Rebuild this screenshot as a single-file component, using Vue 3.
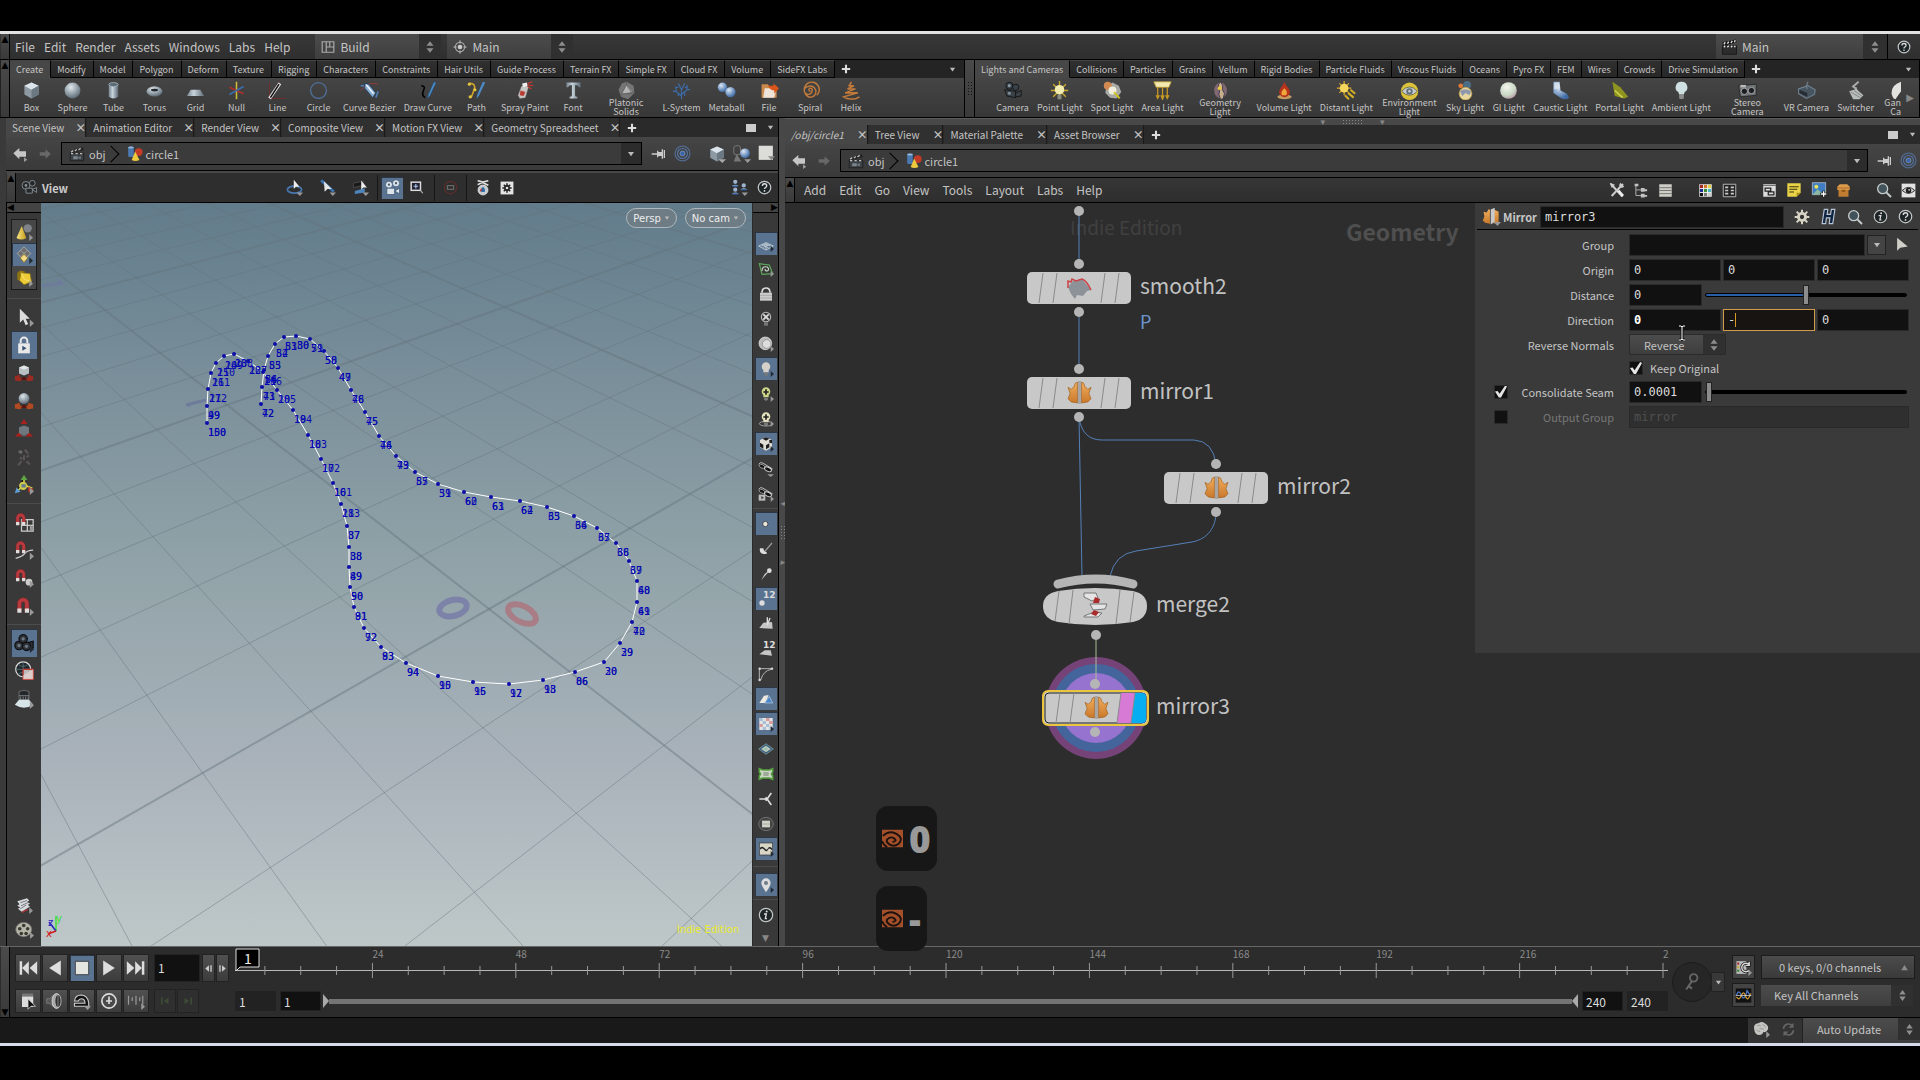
<script setup>
import { h, ref } from 'vue'

const cone = '<path d="M2 20L9 4l6 16q-6 4-13 0z" fill="url(#gYellow)"/>'
const magnet = '<path d="M3 19V9a7 7 0 0 1 14 0v10h-5V9a2 2 0 0 0-4 0v10z" fill="#b93a3e" stroke="#7a1e20" stroke-width=".6"/><path d="M3 15h5v5H3zM12 15h5v5h-5z" fill="#ddd"/>'
const corner = '<path d="M19 15l5 4.500-5 4.500z" fill="#999"/>'
const cornerDown = '<path d="M15 19h9l-4.500 5z" fill="#999"/>'
const cornerDark = '<path d="M19 15l5 4.500-5 4.500z" fill="#222a33"/>'
const clapper = '<path d="M3 11h18v10H3z" fill="#3c4145" stroke="#1a1a1a"/><path d="M3 8l17-5 1 4-18 4z" fill="#222"/><path d="M4 9.500l3-2M9 8l3-2M14 6.500l3-2M4 11.500h3M10 11.500h3M16 11.500h3" stroke="#bbb" stroke-width="1.800"/><path d="M7 15h6v4H7zM13 17l4-2v4z" fill="#7a858c"/>'
const cube = '<path d="M12 2l9 4v11l-9 5-9-5V6z" fill="#8e9aa3"/><path d="M12 2l9 4-9 5-9-5z" fill="#dbe4ea"/><path d="M12 11v11l9-5V6z" fill="#6c7881"/>'
const pointer = '<path d="M7 2v17l4-4 3 7 3-1.500-3-6.500h5z" fill="#ddd"/>'
const bulb = (c) => `<path d="M12 2a6.500 6.500 0 0 0-4 11.500V17h8v-3.500A6.500 6.500 0 0 0 12 2z" fill="${c}"/><path d="M9 18h6v2l-2 2h-2l-2-2z" fill="#777"/>`
const glasses = '<path d="M1 5q2-4 6-2l15 9" stroke="#bbb" fill="none" stroke-width="1.500"/><ellipse cx="6" cy="8" rx="4.500" ry="2.500" transform="rotate(25 6 8)" fill="#111" stroke="#bbb"/><ellipse cx="15" cy="12.500" rx="5.500" ry="3" transform="rotate(25 15 12.500)" fill="#111" stroke="#ddd" stroke-width="1.400"/>'
const help = '<circle cx="12" cy="12" r="10" fill="#1e2526" stroke="#c4c8c8" stroke-width="2"/><path d="M8.500 9.500q0-3.500 3.500-3.500t3.500 3q0 2-2 3-1.500.8-1.500 2.500" fill="none" stroke="#ddd" stroke-width="2.200"/><circle cx="12" cy="17.500" r="1.400" fill="#ddd"/>'
const mirrorHalves = '<path d="M10 2v20l-6-1-3-3 2-5-2-6 3 2 3-3 1-3zM14 2v20l6-1 3-3-2-5 2-6-3 2-3-3-1-3z" fill="url(#gOrange)" stroke="#a0601c" stroke-width=".7"/><path d="M10.500 1h3v22h-3z" fill="#a9a5a5"/>'
const transform = (m) => `<path d="M1 16l6-2v3l5 2 5-2v-3l6 2v5l-6 1-5-3-5 3-6-1z" fill="${m}"/><path d="M8 20l4-4 4 4z" fill="#5c100d"/>`
const check = (a, b) => `<rect x="2" y="3" width="20" height="18" fill="${a}"/><path d="M2 3h5v4.500H2zM12 3h5v4.500h-5zM7 7.500h5V12H7zM17 7.500h5V12h-5zM2 12h5v4.500H2zM12 12h5v4.500h-5zM7 16.500h5V21H7zM17 16.500h5V21h-5z" fill="${b}"/>`

const icons = {
  box: cube,
  sphere: '<circle cx="12" cy="12" r="10" fill="url(#gSphere)"/>',
  tube: '<path d="M6 4v16q6 4 12 0V4z" fill="url(#gMetal)"/><ellipse cx="12" cy="4.500" rx="6" ry="2.500" fill="#5b6972" stroke="#a8b6bf"/>',
  torus: '<ellipse cx="12" cy="13" rx="10" ry="6.500" fill="url(#gSphere)"/><ellipse cx="12" cy="11.500" rx="4.500" ry="1.800" fill="#23282c"/>',
  grid: '<path d="M6 11h12l5 8H1z" fill="url(#gMetal)"/>',
  null: '<path d="M12 1v22" stroke="#d0bb34" stroke-width="2"/><path d="M3 8l18 8" stroke="#b32f2a" stroke-width="2"/><path d="M3 17L21 7" stroke="#3c6fae" stroke-width="2"/>',
  line: '<path d="M1 22h22M2 22V2M2 22L14 1" stroke="#7d2b2b" stroke-width="1"/><path d="M2 22L15 3" stroke="#eee" stroke-width="4"/><path d="M3 21L14 4" stroke="#111" stroke-width="2"/>',
  circle: '<circle cx="12" cy="12" r="10" fill="none" stroke="#50719c" stroke-width="1.600"/>',
  bezier: '<path d="M1 12q8-12 22-8" stroke="#a23a3a" fill="none"/><path d="M6 3l5 1 9 11-4 6L6 9z" fill="#8bb0d4" stroke="#1c3858"/><path d="M8 5l9 11" stroke="#fff" stroke-width="1.500"/><path d="M1 6h4M20 21l3-8" stroke="#4b7db8" stroke-width="2"/>',
  drawcurve: '<path d="M4 6q6 0 3 6t2 9" stroke="#000" stroke-width="2" fill="none"/><path d="M20 1l3 1-8 17-3 3 1-5z" fill="#4b8ac4" stroke="#1d446c" stroke-width=".6"/>',
  path: '<path d="M3 3q9 0 6 8t-4 10" stroke="#d3a62a" stroke-width="2" fill="none"/><circle cx="3" cy="4" r="2" fill="#e6c63f"/><circle cx="10" cy="11" r="2" fill="#e6c63f"/><circle cx="4" cy="20" r="2" fill="#e6c63f"/><path d="M20 1l3 1-8 17-3 3 1-5z" fill="#4b8ac4"/>',
  spray: '<path d="M8 7l6-2 3 3-4 13-7 1-2-4z" fill="#c9c5c2" stroke="#777" stroke-width=".5"/><path d="M9 3l6-1 1 4-6 2z" fill="#eee"/><path d="M7 12l6 2-2 5-5-1z" fill="#b93b33"/><path d="M16 3l6-2M16 5l7 1M16 7l5 3" stroke="#c83a31" stroke-width="1.500"/>',
  font: '<path d="M3 2h18v6h-2q-1-3-5-3v13q0 2 3 2v2H7v-2q3 0 3-2V5Q6 5 5 8H3z" fill="url(#gMetal)"/>',
  platonic: '<path d="M12 1l9 5 1 9-8 8-9-3-3-9 4-8z" fill="#757575"/><path d="M12 5l7 9-13 2z" fill="#b5b5b5"/><path d="M12 5V1M19 14l3 1M6 16l-1 4M12 5L6 16h13z" stroke="#555" fill="none" stroke-width=".7"/>',
  lsystem: '<path d="M12 23V11M12 19l-7-6M12 17l7-6M5 13V7M5 13H1M19 11V5M19 11h4M12 11L8 3M12 11l4-8M8 8H4M16 8h4M8 15v4M16 14v5" stroke="#3d6ca8" stroke-width="1.500" fill="none"/>',
  metaball: '<circle cx="7" cy="8" r="6" fill="url(#gBlue)"/><circle cx="17" cy="14" r="6.500" fill="url(#gBlue)"/>',
  file: '<path d="M2 4h8l2 3h9v14H2z" fill="#c98a4b"/><path d="M4 21L6 9h15l-3 12z" fill="#eee3d8"/><path d="M10 6h7V3l7 6-6 7v-4q-5 0-8-6z" fill="#d9561b"/>',
  spiral: '<path d="M12 13a2 2 0 1 1 2-2 5 5 0 1 1-5-4 7 7 0 1 1-4 8A9.500 9.500 0 1 1 20 18" fill="none" stroke="#c27a3b" stroke-width="1.800"/>',
  helix: '<path d="M12 1L9 6h6L7 10h10L4 15h16L2 20q5 4 16 2l4-2" fill="none" stroke="#c27a3b" stroke-width="1.900"/>',
  camera: '<g fill="#3a4147" stroke="#0d0f11"><circle cx="8" cy="6" r="4.500"/><circle cx="16" cy="8" r="4"/><path d="M2 11l14 2v8L5 19z"/><path d="M16 15l7-3v7l-7 1z"/></g><circle cx="8" cy="6" r="1.800" fill="#8fa0ad"/><circle cx="8" cy="15.500" r="2" fill="#7c8d9a"/>',
  pointlight: '<path d="M12 0v23M1 12h22M4 4l16 16M20 4L4 20" stroke="#c8a62a" stroke-width="1.800"/><circle cx="12" cy="11" r="6" fill="#f3ecb0"/><path d="M9.500 17h5v6h-5z" fill="#8a8a80"/>',
  spotlight: '<path d="M4 8l8-6 8 4 3 8-6 8-8-1-6-6z" fill="#a9a9a5"/><circle cx="6" cy="6" r="5" fill="#d28a50"/><circle cx="12" cy="12" r="5" fill="#f2f0dc"/><path d="M14 14l7 8" stroke="#d1c226" stroke-width="2.500"/>',
  arealight: '<path d="M1 1h22l-3 7H4z" fill="#f3eab0" stroke="#bb9a35"/><path d="M6 8v12M12 8v13M18 8v12M4 18l2 4 2-4M10 18l2 5 2-5M16 18l2 4 2-4" stroke="#c99a22" stroke-width="1.600" fill="none"/>',
  geolight: '<ellipse cx="12" cy="12" rx="8" ry="10" fill="#9c7a8a" opacity=".7"/><path d="M12 1l3 5-1 4 3 6-2 7h-3l-2-6 1-6-2-6z" fill="#c9b08c" stroke="#2b2b44"/><circle cx="11" cy="9" r="2.500" fill="#e8c940"/>',
  volumelight: '<ellipse cx="12" cy="20" rx="9" ry="3" fill="#e6b56a" opacity=".8"/><path d="M12 1q1 5 5 8 4 6-1 10-4 3-8 0-5-4-1-10 3-3 5-8z" fill="#b8331b"/><path d="M12 9q5 5 2 9h-5q-3-4 3-9z" fill="#f0a73c"/>',
  distantlight: '<path d="M9 0v18M0 9h18M3 3l12 12M15 3L3 15" stroke="#e0a92a" stroke-width="1.500"/><circle cx="9" cy="9" r="5.500" fill="#f5d65c"/><path d="M17 11l6 5M14 15l7 6M10 18l5 5" stroke="#d4b024" stroke-width="2.500"/>',
  envlight: '<circle cx="12" cy="13" r="11" fill="#dcc23a"/><path d="M2 13q10-11 20 0-10 10-20 0z" fill="#c5ccd0" stroke="#5c5c40"/><circle cx="12" cy="13" r="4" fill="#5f6d77"/><circle cx="12" cy="13" r="1.800" fill="#b9c2c8"/>',
  skylight: '<circle cx="14" cy="5" r="5" fill="#4c6d88"/><circle cx="6" cy="6" r="3" fill="#e0793a"/><circle cx="12" cy="16" r="8" fill="#e7d7a0" stroke="#bf9f45"/><path d="M5 13q6-5 14 0l-2 5-5-3-4 4z" fill="#8f98ad"/>',
  gilight: '<circle cx="12" cy="12" r="10.500" fill="url(#gGi)"/>',
  caustic: '<path d="M3 1h8l1 11 8 4 3 5q-6 4-11 0l-9-6z" fill="url(#gBlue)"/><path d="M4 2h6v8H4z" fill="#dbe3ec" opacity=".8"/>',
  portal: '<path d="M3 1l10 7 10 12-5 2L6 19z" fill="#8f9421"/><path d="M6 12l10 9" stroke="#ccd04a" stroke-width="2"/>',
  ambient: '<path d="M12 1a7 7 0 0 0-4 13l1 3h6l1-3a7 7 0 0 0-4-13z" fill="#cfe0e2"/><path d="M9 17h6v5l-3 1-3-1z" fill="#8b8b8b"/>',
  stereo: '<path d="M1 6l22-2v14l-20 2z" fill="#6f7476" stroke="#222"/><circle cx="8" cy="13" r="4" fill="#1b1d1f" stroke="#bbb"/><circle cx="17" cy="12" r="4" fill="#1b1d1f" stroke="#bbb"/><path d="M3 5h7v3H3z" fill="#bbb"/>',
  vr: '<path d="M14 1q-3 5-1 9M2 10l12-4 9 5-1 6-10 5L2 16z" fill="#46545f" stroke="#6f7f8c" stroke-width="1.500"/><path d="M3 11l10 4v5L3 15z" fill="#262c31"/>',
  switcher: '<path d="M16 1l-7 6 4 3M12 8l2 6" stroke="#aaa" stroke-width="2.500" fill="none"/><path d="M4 13l9-3 9 8-5 5h-8z" fill="#b9bcbc"/><path d="M6 14l12 7M10 12l10 7" stroke="#777"/>',
  gamepad: '<path d="M24 1q-12 4-12 14 1 7 5 8l7-10z" fill="#e2e2e0"/>',
  desk: '<path d="M2 3h20v18H2zM9 3v18M9 12h13M15 3v9" fill="none" stroke="#aaa" stroke-width="2"/>',
  radial: '<circle cx="12" cy="12" r="8" fill="none" stroke="#aaa" stroke-width="1.800"/><circle cx="12" cy="12" r="4" fill="#ccc"/><path d="M12 1v5M12 18v5M1 12h5M18 12h5" stroke="#aaa" stroke-width="2.500"/>',
  clapper,
  clapperWide: '<path d="M2 11h20v12H2z" fill="#2c2c2c" stroke="#111"/><path d="M2 6l19-4 1 4-19 5z" fill="#111"/><path d="M4 9l2-3M9 8l2-3M14 7l2-3M19 6l1-3M4 13l2-2M9 13l2-2M14 13l2-2M19 13l1-2" stroke="#ddd" stroke-width="2"/>',
  geo: '<path d="M3 3q4-2 8 0v14H5q-2 0-2-2z" fill="#4a78ae"/><ellipse cx="7" cy="3.500" rx="4" ry="1.500" fill="#9ab9da"/><circle cx="18" cy="10" r="5.500" fill="#c33a27"/><path d="M8 21l5-12 6 12q-6 3-11 0z" fill="#ecc93d"/>',
  back: '<path d="M2 11L11 3v5h10v8H11v4z" fill="#c6c6c6"/><path d="M18 17l5 3.500-5 3.500z" fill="#999"/>',
  forward: '<path d="M22 12L13 4v5H3v6h10v5z" fill="#686868"/>',
  pin: '<path d="M1 12h9M10 7v10M17 5v14M20 6v12" stroke="#ccc" stroke-width="2"/><path d="M10 9h7v6h-7z" fill="#ccc"/>',
  target: '<circle cx="12" cy="12" r="10.500" fill="none" stroke="#53688c" stroke-width="1.800"/><circle cx="12" cy="12" r="7" fill="none" stroke="#5474a4" stroke-width="1.600"/><circle cx="12" cy="12" r="3.500" fill="#3a65a8" stroke="#84a0cc"/>',
  shade: cube + '<path d="M14 19h10l-5 5z" fill="#aaa"/>',
  ghost: '<rect x="1" y="1" width="9" height="12" rx="3" fill="none" stroke="#888"/><path d="M5 12l6 10H1z" fill="#777"/><circle cx="16" cy="11" r="6.500" fill="url(#gBlue)"/>' + cornerDown,
  square: '<path d="M1 1h20v20H1z" fill="#dcdcd8"/><path d="M14 16h10l-5 5z" fill="#888"/>',
  minirect: '<path d="M2 4h20v16H2z" fill="#ccc"/>',
  viewcam: '<g fill="#25282b" stroke="#8d969c" stroke-width="1.200"><circle cx="7" cy="9" r="5.500"/><circle cx="16" cy="6" r="4"/><path d="M7 13h9v7H7zM16 15l6-3v7z"/></g><circle cx="7" cy="9" r="1.800" fill="#8d969c"/>',
  orbit: '<ellipse cx="12" cy="15" rx="10" ry="5" fill="none" stroke="#4878b0" stroke-width="2.400"/><path d="M11 1v13l3-3h5z" fill="#eee"/>' + cornerDown,
  snapArrow: '<path d="M3 2l18 16" stroke="#3e73b0" stroke-width="4"/><path d="M7 3l1 15 4-4h6z" fill="#e5e5e5"/>' + cornerDown,
  clipArrow: '<path d="M2 6l14-3v6L2 12z" fill="#181818" stroke="#555"/><path d="M4 17l14-4v6L4 21z" fill="#4c85bd"/><path d="M13 2v13l3-3h5z" fill="#eee"/>' + cornerDown,
  cameraOn: '<g fill="#dce4ea" stroke="#33506f" stroke-width="1"><circle cx="7" cy="8" r="5"/><circle cx="17" cy="6" r="5"/><path d="M4 13h11v9H4zM15 17l7-4v8z"/></g><circle cx="7" cy="8" r="1.600" fill="#456"/><circle cx="17" cy="6" r="1.600" fill="#456"/>',
  zoomBox: '<rect x="2" y="2" width="16" height="14" fill="#223" stroke="#ddd" stroke-width="2.500"/><path d="M10 5v8M6 9h8" stroke="#aac4e8" stroke-width="2"/><path d="M17 15l5 6" stroke="#bbb" stroke-width="2"/>',
  stop: '<circle cx="12" cy="12" r="10" fill="none" stroke="#5e2c2c" stroke-width="2"/><path d="M7 9h10v6H7z" fill="none" stroke="#666" stroke-width="2"/>',
  snapshot: '<path d="M12 3L4 7M12 4l8 4M12 3l8-2M12 3L4 1" stroke="#ddd" stroke-width="2.500"/><circle cx="12" cy="15" r="7.500" fill="#c5cbd0" stroke="#eee"/><path d="M12 10q5 5 2 8h-4q-3-3 2-8z" fill="#2a6da8"/><path d="M10 13l-2 4" stroke="#b63b2e" stroke-width="2"/>',
  gearBox: '<path d="M1 1h22v22H1z" fill="#e4e4e4"/><path d="M12 4v16M4 12h16M6.500 6.500l11 11M17.500 6.500l-11 11" stroke="#222" stroke-width="2.600"/><circle cx="12" cy="12" r="5" fill="#222"/><circle cx="12" cy="12" r="2.300" fill="#e4e4e4"/>',
  people: '<g fill="#9db2cc"><circle cx="6" cy="4" r="3"/><path d="M1 10q5-4 10 0zM13 15q5-4 10 0z"/><circle cx="18" cy="9" r="3"/><circle cx="6" cy="15" r="3"/><path d="M1 21q5-4 10 0z"/></g><path d="M2 10h8M14 15h8M2 21h8" stroke="#3866a8" stroke-width="2"/>' + cornerDown,
  help,
  objMode: '<circle cx="17" cy="7" r="5.500" fill="#7d8388"/>' + cone + corner,
  compMode: '<path d="M12 1l9 9-9 9-9-9z" fill="#6e6e6e" stroke="#bbb"/><path d="M7.500 5.500l9 9M16.500 5.500l-9 9" stroke="#aaa"/><path d="M12 11l5 5-5 6-5-6z" fill="#f4da84" stroke="#8a6e20"/>' + cornerDark,
  dynMode: '<path d="M3 5l4-3 6 1-5 14-5-3z" fill="#8d7410"/><path d="M8 5l12 1 2 11-10 4-6-6z" fill="#eccb36" stroke="#8a7110"/><path d="M8 5l5 9 9 3" stroke="#f9e681" fill="none"/>' + corner,
  arrow: pointer + corner,
  lock: '<path d="M8 10V7a4 4 0 0 1 8 0v3" fill="none" stroke="#e8e8e8" stroke-width="2.400"/><path d="M5 10h14v12H5z" fill="#e8e8e8"/><path d="M10 13l5 3-5 3z" fill="#33506f"/>',
  move: transform('#9c2b23') + '<path d="M12 3l6 2.500v7L12 15l-6-2.500v-7z" fill="#b9bec2"/><path d="M12 3l6 2.500L12 8 6 5.500z" fill="#dfe4e7"/>',
  rotate: transform('#b04a20') + '<circle cx="12" cy="9" r="6.500" fill="url(#gSphere)"/>',
  scale: '<path d="M9 8h6v13H9z" fill="#50565a"/><path d="M12 0l4 6H8zM1 21l5-5 4 5zM23 21l-5-5-4 5z" fill="#a9211c"/><path d="M6 10l6-2 6 2v7l-6 3-6-3z" fill="#6f787e"/>',
  pose: '<path d="M5 5l5 2M13 3l4 5M12 10v6M9 17l-4 5M15 17l4 4M7 13l3 1M15 12l3-2" stroke="#5c5555" stroke-width="2.500"/><circle cx="8" cy="6" r="2" fill="#6a6a6a"/>',
  handles: '<path d="M12 2v10L3 20M12 12l10 4" stroke="#d5d04a" stroke-width="2"/><path d="M12 0l4 6H8z" fill="#5fa845"/><path d="M1 22l2-7 5 5z" fill="#5f9bd0"/><path d="M24 17l-7-3v7z" fill="#b93226"/><circle cx="11" cy="13" r="5" fill="#cfc94c"/><path d="M9 11h5v4H9z" fill="#64798c"/>' + corner,
  magnetGrid: '<path d="M9 9h14v14H9zM16 9v14M9 16h14" fill="none" stroke="#ccc" stroke-width="1.500"/><g transform="scale(.8)">' + magnet + '</g>' + corner,
  magnetCurve: '<path d="M2 22q8-2 11-6t10-4" fill="none" stroke="#ccc" stroke-width="1.500"/><g transform="scale(.8)">' + magnet + '</g>' + corner,
  magnetPoint: '<g transform="scale(.8)">' + magnet + '</g><circle cx="18" cy="17" r="4" fill="#ccc"/>' + corner,
  magnetAll: '<g transform="translate(1)">' + magnet + '</g>' + corner,
  viewTool: '<g fill="#30343a" stroke="#0e1012" stroke-width="1.500"><path d="M14 12l9-2v8l-9-1z"/><circle cx="6" cy="15" r="5"/><circle cx="15" cy="16" r="5"/><circle cx="11" cy="7" r="5"/></g><g fill="#6d7984"><circle cx="11" cy="7" r="2"/><circle cx="6" cy="15" r="2"/><circle cx="15" cy="16" r="2"/></g>' + cornerDark,
  globeRegion: '<circle cx="11" cy="10" r="9" fill="#20292c" stroke="#ddd" stroke-width="1.500"/><path d="M2 10h18M11 1v18M5 4q6 5 12 0M5 16q6-5 12 0" stroke="#5b7178" fill="none"/><path d="M11 10h12v12H11z" fill="#b9b9b9" stroke="#c13b33" stroke-width="1.500"/><path d="M11 17L23 10v12H11z" fill="#e8d5d2" opacity=".7"/>',
  lens: '<path d="M6 3q6-3 12 0v10H6z" fill="#23282b" stroke="#777"/><path d="M6 8h12M8 9v5M11 9v5M14 9v5M17 9v5" stroke="#8b8b8b"/><path d="M6 13h12l5 6q-11 7-22 0z" fill="#d7e4e8"/>' + corner,
  flipbook: '<path d="M3 7l13-4 3 3-3 2 4 2-3 2 3 2-11 7-5-4 3-2-4-2 3-2z" fill="#d8dadd"/><path d="M7 9l9-3M8 13l9-4M7 17l8-5" stroke="#555d66"/><path d="M9 22l8-4" stroke="#b33" stroke-width="1.500"/>' + corner,
  reelFlat: '<ellipse cx="11" cy="12" rx="10" ry="9" fill="#b5b5a8" stroke="#777"/><g fill="#3b3b36"><circle cx="11" cy="7" r="2.300"/><circle cx="6" cy="11" r="2.300"/><circle cx="16" cy="11" r="2.300"/><circle cx="8" cy="17" r="2.300"/><circle cx="14" cy="17" r="2.300"/></g>' + corner,
  plane: '<path d="M1 15l11-5 11 5-11 6zM5 15l7-3 7 3M12 10v11M8 17l9-4M7 13l9 5" fill="none" stroke="#bfcbd5" stroke-width="1.400"/>' + cornerDark,
  greenGrid: '<path d="M2 4l15 2 5 13-16 1z" fill="none" stroke="#5da55a" stroke-width="1.800"/><path d="M6 15q0-8 8-6 4 4 0 6-4 0-3-3" fill="none" stroke="#c3d1c3" stroke-width="1.800"/>' + corner,
  padlock: '<path d="M6 10q0-7 6-7t6 7" fill="none" stroke="#ddd" stroke-width="2.400"/><path d="M3 10h18v12H3z" fill="#ccc"/><path d="M3 14h18M3 18h18" stroke="#999"/>',
  bulbX: '<circle cx="12" cy="9" r="7" fill="none" stroke="#bbb" stroke-width="1.600"/><path d="M8 5l8 8M16 5l-8 8" stroke="#ddd" stroke-width="2.600"/><path d="M9 17h6v5H9z" fill="#777"/>',
  disc: '<circle cx="11" cy="11" r="9.500" fill="#bbb" stroke="#eee"/><circle cx="13" cy="12" r="6.500" fill="#ddd" stroke="#888"/>' + corner,
  bulbOn: bulb('#d4d2c8') + cornerDark,
  bulbPlus: bulb('#cfd68a') + '<path d="M12 5v8M8 9h8" stroke="#222" stroke-width="2.500"/>' + corner,
  bulbRing: bulb('#e6e4c0') + '<path d="M12 5v8M8 9h8" stroke="#222" stroke-width="2.500"/><ellipse cx="12" cy="19" rx="10" ry="3.500" fill="none" stroke="#ccc"/>' + corner,
  soccer: '<path d="M12 2l9 4v11l-9 5-9-5V6z" fill="#e0ded4"/><path d="M12 2l5 2-5 3-5-3zM3 10l5 3v6l-5-3zM12 14l5-3v6l-5 3zM17 6l4 0v5l-4-1z" fill="#1c1c1c"/>' + cornerDark,
  glasses: glasses + '<path d="M14 20h10l-5 4z" fill="#999"/>',
  glassesCam: glasses + '<path d="M1 13h10v9H1z" fill="#bbb"/><path d="M5 15l4 2.500-4 2.500z" fill="#444"/>' + corner,
  dot: '<circle cx="11" cy="12" r="4" fill="#e6e6dc" stroke="#333" stroke-width="1.200"/>',
  normal: '<path d="M21 3L9 17" stroke="#999" stroke-width="2"/><path d="M4 12q-1 8 9 6-5 0-6-6z" fill="#ddd" stroke="#ddd" stroke-width="2.500"/>',
  tangent: '<path d="M20 4L5 21l5-9z" fill="#ccc"/><circle cx="17" cy="7" r="3.500" fill="#ddd"/>',
  numPoint: '<circle cx="6" cy="18" r="4" fill="#ddd"/>',
  primNormal: '<path d="M2 18l6-8 13-1 1 10z" fill="#c6c6c6"/><path d="M14 2v12M18 3l-4 11" stroke="#ddd" stroke-width="2"/>',
  numPrim: '<path d="M2 20l8-6h9l2 8z" fill="#c6c6c6"/>',
  bezierPath: '<path d="M2 21V4h19M4 21Q8 7 20 5" fill="none" stroke="#bbb" stroke-width="1.400"/><circle cx="2.500" cy="4" r="1.800" fill="#ddd"/><circle cx="2.500" cy="21" r="1.800" fill="#ddd"/><circle cx="21" cy="4" r="1.800" fill="#ddd"/>',
  shadedPlane: '<path d="M2 18L9 7l7-1-5 12z" fill="#eceae0"/><path d="M10 18l7-10 5 10z" fill="#4a86c4" stroke="#bcd3ea"/>',
  checker: check('#e4e4e4', '#a9bfd6') + '<path d="M2 12h5v4.500H2zM12 3h5v4.500h-5zM17 7.500h5V12h-5z" fill="#d99a9a"/>' + cornerDark,
  diamond: '<path d="M12 4l11 8-11 8L1 12z" fill="#3c5f7c" stroke="#8aa"/><path d="M12 7l7 5-7 5-7-5z" fill="#c6cfc6"/><path d="M12 8v8M8 12h8" stroke="#6a8" stroke-width=".8"/>',
  greenHull: '<path d="M2 4l5 2h10l5-2v5l-2 3 2 3v5l-5-2H7l-5 2v-5l2-3-2-3z" fill="#cdd6c6" stroke="#57a33f" stroke-width="2.400"/><path d="M8 9h8v6H8z" fill="#9da897"/>',
  tripod: '<circle cx="13" cy="12" r="3" fill="#ddd"/><path d="M2 12h9M15 10l5-7M15 14l5 7" stroke="#ddd" stroke-width="2.400"/>',
  layers: '<ellipse cx="12" cy="12" rx="11" ry="10" fill="#444" stroke="#888"/><path d="M6 7h12v10H6z" fill="#d2d2c8"/><path d="M6 12h12" stroke="#999"/>',
  imageBg: '<rect x="2" y="3" width="20" height="18" fill="#d9d6c8" stroke="#333"/><path d="M3 13q4-4 7 1 3 3 5-1t6 1v-3q-4-4-6 0t-5 0q-3-4-7-1z" fill="#222"/>' + cornerDark,
  marker: '<path d="M12 23Q5 13 5 9a7 7 0 0 1 14 0q0 4-7 14z" fill="#dcdcdc"/><circle cx="12" cy="9" r="3" fill="#6d7b88"/>' + cornerDark,
  info: '<circle cx="12" cy="12" r="10" fill="#1e2526" stroke="#c4c8c8" stroke-width="1.800"/><path d="M9 10.500h3.500l-1.500 7h2.500" fill="none" stroke="#ddd" stroke-width="2"/><circle cx="13" cy="6.800" r="1.500" fill="#ddd"/>',
  tools: '<path d="M3 3l17 19M21 3L4 21" stroke="#ccc" stroke-width="3"/><path d="M1 1l8 3-5 5zM17 1l6 6-4 2-4-4z" fill="#ccc"/><path d="M14 13l7 8" stroke="#eee" stroke-width="4"/>',
  tree: '<path d="M3 3v17M3 11h9M3 20h9" stroke="#aaa" stroke-width="1.600"/><path d="M1 1h6v4H1zM11 8h6v6h-6zM11 17h6v6h-6zM17 10h4v3h-4zM17 19h4v3h-4z" fill="#c2c2c2"/>',
  list: '<path d="M2 2h20v20H2z" fill="#cfcfc8"/><path d="M2 7.500h20M2 12h20M2 17h20" stroke="#777" stroke-width="1.600"/>',
  palette: '<path d="M2 2h20v20H2z" fill="#eee"/><path d="M3 3h5v5H3z" fill="#a3282a"/><path d="M9.500 3h5v5h-5z" fill="#d1742a"/><path d="M16 3h5v5h-5z" fill="#e0d243"/><path d="M3 9.500h5v5H3z" fill="#222c8c"/><path d="M9.500 9.500h5v5h-5z" fill="#3b8c32"/><path d="M16 9.500h5v5h-5z" fill="#49b5c2"/><path d="M3 16h5v5H3z" fill="#111"/><path d="M9.500 16h5v5h-5z" fill="#777"/><path d="M16 16h5v5h-5z" fill="#ccc"/>',
  listGrid: '<path d="M2 2h20v20H2z" fill="#222" stroke="#bbb" stroke-width="1.500"/><path d="M5 7h5M14 7h5M5 12h5M14 12h5M5 17h5M14 17h5" stroke="#ccc" stroke-width="2.500"/>',
  netbox: '<path d="M2 2h20v20H2z" fill="#ddd"/><path d="M2 4h20" stroke="#333"/><path d="M5 8h9v5H5zM10 14h9v5h-9z" fill="#ddd" stroke="#222" stroke-width="2"/>',
  note: '<path d="M2 2h20v14l-6 6H2z" fill="#e8d247"/><path d="M5 7h14M5 11h12M5 15h7" stroke="#3b350e" stroke-width="1.600"/><path d="M22 16h-6v6z" fill="#a8901d"/>',
  addImage: '<path d="M2 1h20v18H2z" fill="#3f7ec2" stroke="#ccd" stroke-width="1"/><circle cx="8" cy="7" r="3" fill="#e7e35a"/><path d="M2 19l8-8 6 5 6-4v7z" fill="#8cb6a0"/><path d="M19 13v10M14 18h10" stroke="#111" stroke-width="4"/><path d="M19 14v8M15 18h8" stroke="#fff" stroke-width="2"/>',
  crate: '<path d="M2 6l4-4h12l4 4v5H2z" fill="#dd9b4b"/><path d="M4 11h16v11H4z" fill="#c07d31"/><path d="M2 8h20" stroke="#8b5214"/><path d="M9 11h6v3H9z" fill="#8b5214"/>',
  search: '<circle cx="10" cy="10" r="7.500" fill="#42535b" stroke="#c6cccc" stroke-width="2"/><path d="M15.500 15.500l7 7" stroke="#c6cccc" stroke-width="3"/>',
  eye: '<path d="M1 1h22v22H1z" fill="#e2e2e2"/><path d="M2 12q10-10 20 0-10 9-20 0z" fill="#e2e2e2" stroke="#222" stroke-width="1.500"/><circle cx="12" cy="12" r="4.500" fill="#222"/><circle cx="13" cy="11" r="1.300" fill="#ddd"/>',
  mirror: mirrorHalves,
  mirrorMenu: '<path d="M10 3v18l-6-1-3-3 2-5-1-6 4 1 2-4zM15 3v18l6-1V6z" fill="url(#gOrange)"/><path d="M11 3l5-2v18l-5 3z" fill="#c9c9c9"/>' + cornerDown,
  gear: '<path d="M12 1v22M1 12h22M4 4l16 16M20 4L4 20" stroke="#d8d4c4" stroke-width="3"/><circle cx="12" cy="12" r="7.500" fill="#d8d4c4"/><circle cx="12" cy="12" r="3.200" fill="#333"/>',
  hLogo: '<path d="M6 2h5l-1 7h5l1-7h5l-3 20h-5l1-8H9l-1 8H3z" fill="#10243f" stroke="#b8c6d8" stroke-width="1.600"/>',
  pick: '<path d="M5 1v21l5-5 12-2z" fill="#cfcfc8"/>',
  toStart: '<path d="M2 4h3v16H2zM13 4v16L5 12zM23 4v16l-9-8z" fill="#ddd"/>',
  playBack: '<path d="M19 3v18L5 12z" fill="#ddd"/>',
  stopPlay: '<path d="M4 4h16v16H4z" fill="#e4e4e0" stroke="#333"/>',
  play: '<path d="M5 3v18l14-9z" fill="#ddd"/>',
  toEnd: '<path d="M19 4h3v16h-3zM11 4v16l8-8zM1 4v16l9-8z" fill="#ddd"/>',
  prevStep: '<path d="M13 5v14L5 12zM16 5h3v14h-3z" fill="#ccc"/>',
  nextStep: '<path d="M11 5v14l8-7zM5 5h3v14H5z" fill="#ccc"/>',
  clip: '<path d="M4 2h15v4H4z" fill="#777"/><path d="M4 6h15v14H4z" fill="#ddd"/><path d="M12 9v14l4-4h6z" fill="#111" stroke="#ddd"/>',
  speaker: '<path d="M1 9h4l5-5v16l-5-5H1z" fill="#555" stroke="#888"/><ellipse cx="14" cy="12" rx="6" ry="10" fill="#aaa" stroke="#ddd"/><ellipse cx="16" cy="12" rx="3.500" ry="8" fill="#333"/><path d="M16 4v16" stroke="#999"/>',
  loop: '<path d="M2 19v-4h14q0-6-5-6-3 0-4 3H2q1-8 9-8 9 1 10 11v4z" fill="#111" stroke="#ccc" stroke-width="1.500"/>' + cornerDown,
  clock: '<circle cx="12" cy="12" r="9.500" fill="#4a4a4a" stroke="#ddd" stroke-width="2.200"/><path d="M12 6v10M8 12h8" stroke="#ddd" stroke-width="2.200"/>',
  ticks: '<path d="M2 5v12M7 7v5M12 5v12M17 7v5M21 5v12" stroke="#999" stroke-width="1.600"/>' + corner,
  keyPrev: '<path d="M5 6h3v12H5z" fill="#3d4a35"/><path d="M18 6v12l-8-6z" fill="#3d4a35"/>',
  keyNext: '<path d="M16 6h3v12h-3z" fill="#3d4a35"/><path d="M6 6v12l8-6z" fill="#3d4a35"/>',
  key: '<circle cx="14" cy="7" r="4.500" fill="none" stroke="#666" stroke-width="2.200"/><path d="M12 11L5 21M8 17l4 3" stroke="#666" stroke-width="2.400"/>',
  scopeKeys: '<path d="M2 3h14v18H2z" fill="#bbb"/><path d="M3 5h3v3H3z" fill="#a33"/><path d="M3 10h3v3H3z" fill="#ca3"/><path d="M3 15h3v3H3z" fill="#383"/><path d="M20 8a6 6 0 1 0 0 8M20 3v6h-5" fill="none" stroke="#111" stroke-width="4"/><path d="M20 8a6 6 0 1 0 0 8M20 4v5h-5" fill="none" stroke="#ddd" stroke-width="2"/>' + corner,
  scopeWave: '<path d="M1 2h22v20H1z" fill="#111"/><path d="M2 12q3-9 6-2t5 5 4-10l5 8" fill="none" stroke="#4c78c9" stroke-width="1.800"/><path d="M2 14q4 6 7-2t6 1 7-4" fill="none" stroke="#d29a32" stroke-width="1.800"/><path d="M1 12h22" stroke="#ddd"/>',
  brain: '<path d="M3 13q-2-8 6-9 5-3 9 1 5 3 3 8-2 4-6 3-1 4-5 4-6 0-7-7z" fill="#c4c4c0"/><path d="M7 8q3-2 5 0M10 12q4-2 6 1M14 6q4 1 4 4M6 13q2 3 5 2" stroke="#888" fill="none"/>' + corner,
  refresh: '<path d="M4 11a8 8 0 0 1 14-5M20 13a8 8 0 0 1-14 5" fill="none" stroke="#666" stroke-width="2.500"/><path d="M20 1v8h-8zM4 23v-8h8z" fill="#666"/>',
  updown: '<path d="M12 2l6 8H6zM12 22l6-8H6z" fill="#8e8e8e"/>',
  down: '<path d="M3 6h18l-9 13z" fill="#bbb"/>',
  up: '<path d="M3 19h18L12 5z" fill="#8a8a8a"/>',
  plus: '<path d="M12 2v20M2 12h20" stroke="#ddd" stroke-width="5"/>',
  logo: '<path d="M0 2h24v20H0z" fill="#a4502a"/><path d="M1 9q8-7 16-2t2 11q-5 4-10 1t-3-6q4-4 8-1t-2 4M0 15q2 5 6 7" fill="none" stroke="#1d1210" stroke-width="2.200"/>',
}
const Icon = (p) => h('svg', { class: 'icon', viewBox: '0 0 24 24', width: p.size ?? 18, height: p.size ?? 18, 'aria-hidden': 'true', innerHTML: icons[p.name] })
Icon.props = ['name', 'size']

const menus = ['File', 'Edit', 'Render', 'Assets', 'Windows', 'Labs', 'Help']
const netMenus = ['Add', 'Edit', 'Go', 'View', 'Tools', 'Layout', 'Labs', 'Help']
const shelves = [
  {
    cls: 'left',
    tabs: ['Create', 'Modify', 'Model', 'Polygon', 'Deform', 'Texture', 'Rigging', 'Characters', 'Constraints', 'Hair Utils', 'Guide Process', 'Terrain FX', 'Simple FX', 'Cloud FX', 'Volume', 'SideFX Labs'],
    tools: [['Box', 'box'], ['Sphere', 'sphere'], ['Tube', 'tube'], ['Torus', 'torus'], ['Grid', 'grid'], ['Null', 'null'], ['Line', 'line'], ['Circle', 'circle'], ['Curve Bezier', 'bezier'], ['Draw Curve', 'drawcurve'], ['Path', 'path'], ['Spray Paint', 'spray'], ['Font', 'font'], ['Platonic\nSolids', 'platonic'], ['L-System', 'lsystem'], ['Metaball', 'metaball'], ['File', 'file'], ['Spiral', 'spiral'], ['Helix', 'helix']],
  },
  {
    cls: 'right',
    tabs: ['Lights and Cameras', 'Collisions', 'Particles', 'Grains', 'Vellum', 'Rigid Bodies', 'Particle Fluids', 'Viscous Fluids', 'Oceans', 'Pyro FX', 'FEM', 'Wires', 'Crowds', 'Drive Simulation'],
    tools: [['Camera', 'camera'], ['Point Light', 'pointlight'], ['Spot Light', 'spotlight'], ['Area Light', 'arealight'], ['Geometry\nLight', 'geolight'], ['Volume Light', 'volumelight'], ['Distant Light', 'distantlight'], ['Environment\nLight', 'envlight'], ['Sky Light', 'skylight'], ['GI Light', 'gilight'], ['Caustic Light', 'caustic'], ['Portal Light', 'portal'], ['Ambient Light', 'ambient'], ['Stereo\nCamera', 'stereo'], ['VR Camera', 'vr'], ['Switcher', 'switcher']],
  },
]
const sceneTabs = ['Scene View', 'Animation Editor', 'Render View', 'Composite View', 'Motion FX View', 'Geometry Spreadsheet']
const netTabs = ['/obj/circle1', 'Tree View', 'Material Palette', 'Asset Browser']

const leftTools = [
  ['arrow', 'lock', 'move', 'rotate', 'scale', 'pose', 'handles'],
  ['magnetGrid', 'magnetCurve', 'magnetPoint', 'magnetAll'],
  ['viewTool', 'globeRegion', 'lens'],
]
const displayTools = [
  ['plane', 'greenGrid', 'padlock', 'bulbX', 'disc', 'bulbOn', 'bulbPlus', 'bulbRing', 'soccer', 'glasses', 'glassesCam'],
  ['dot', 'normal', 'tangent', 'numPoint', 'primNormal', 'numPrim', 'bezierPath', 'shadedPlane', 'checker', 'diamond', 'greenHull', 'tripod', 'layers', 'imageBg'],
  ['marker'],
  ['info'],
]
const active = new Set(['lock', 'viewTool', 'plane', 'bulbOn', 'soccer', 'dot', 'numPoint', 'shadedPlane', 'checker', 'imageBg', 'marker'])

/* Ground grid: world (u, v) projected to the viewport. */
const project = (u, v) => {
  const w = 1 + 0.402 * u + 0.292 * v
  return [(489 - 170.8 * u + 536.5 * v) / w, (609 - 41.2 * u - 47.6 * v) / w]
}
const gridLines = []
for (let i = -8; i <= 22; i++) {
  const k = i / 5
  const v0 = Math.max(-4, (0.15 - 1 - 0.402 * k) / 0.292)
  const u0 = Math.max(-4, (0.15 - 1 - 0.292 * k) / 0.402)
  for (const [a, b] of [[project(k, v0), project(k, 5)], [project(u0, k), project(5, k)]]) {
    gridLines.push({ a, b, major: i % 5 === 0 })
  }
}

const points = [
  [207, 423, '100', '150'], [207, 406, '99', '49'], [208, 389, '112', '27'], [211, 373, '111', '26'], [216, 363, '110', '25'], [224, 356, '109', '24'], [234, 354, '108', '23'], [248, 361, '107', '22'], [263, 372, '106', '21'], [277, 390, '105', '20'], [293, 410, '104', '19'], [308, 435, '103', '18'], [321, 459, '102', '17'], [333, 483, '101', '16'], [341, 504, '113', '28'], [347, 526, '87', '37'], [349, 547, '88', '38'], [349, 567, '89', '49'], [350, 587, '90', '50'], [354, 607, '91', '81'], [364, 628, '92', '72'], [381, 647, '93', '83'], [406, 663, '94', '94'], [438, 676, '95', '10'], [473, 682, '96', '15'], [509, 684, '97', '12'], [543, 680, '98', '13'], [575, 672, '86', '06'], [604, 662, '30', '20'], [620, 643, '29', '39'], [632, 622, '70', '42'], [637, 602, '69', '41'], [637, 581, '68', '40'], [629, 561, '69', '37'], [616, 543, '68', '36'], [597, 528, '67', '35'], [574, 516, '66', '34'], [547, 507, '65', '33'], [520, 501, '64', '62'], [491, 497, '63', '61'], [464, 492, '62', '60'], [438, 484, '59', '31'], [415, 472, '57', '85'], [396, 456, '43', '79'], [379, 436, '44', '76'], [365, 412, '45', '75'], [351, 390, '46', '78'], [338, 368, '47', '49'], [324, 351, '58', '50'], [310, 339, '51', '79'], [296, 336, '80', '30'], [284, 337, '81', '53'], [275, 344, '82', '54'], [268, 356, '83', '55'], [264, 370, '84', '56'], [262, 387, '41', '73'], [261, 404, '42', '72'],
]
const curve = points.map((p) => `${p[0]},${p[1]}`).join(' ')

const nodes = [
  { x: 1079, y: 288, name: 'smooth2', kind: 'smooth' },
  { x: 1079, y: 393, name: 'mirror1', kind: 'mirror' },
  { x: 1216, y: 488, name: 'mirror2', kind: 'mirror' },
]
const frames = Array.from({ length: 40 }, (_, i) => (i + 1) * 6)
const frameX = (f) => ((f - 1) * 5.975 * 100) / 1433 + '%'
const distance = ref(0)
const seam = ref(0)
</script>

<template>
  <div class="screen">
    <svg class="defs" width="0" height="0" aria-hidden="true">
      <defs>
        <radialGradient id="gSphere" cx=".4" cy=".3" r=".7"><stop offset="0" stop-color="#dfe8ee" /><stop offset="1" stop-color="#5f6d78" /></radialGradient>
        <radialGradient id="gBlue" cx=".35" cy=".3" r=".7"><stop offset="0" stop-color="#dbe8f6" /><stop offset="1" stop-color="#3f6aa3" /></radialGradient>
        <radialGradient id="gGi" cx=".4" cy=".3" r=".8"><stop offset="0" stop-color="#f4f6ee" /><stop offset=".6" stop-color="#c9d8c4" /><stop offset="1" stop-color="#b48aa2" /></radialGradient>
        <linearGradient id="gMetal"><stop offset="0" stop-color="#75838d" /><stop offset=".4" stop-color="#c8d4dc" /><stop offset="1" stop-color="#5d6a74" /></linearGradient>
        <linearGradient id="gYellow"><stop offset="0" stop-color="#f8e684" /><stop offset="1" stop-color="#c79d1c" /></linearGradient>
        <linearGradient id="gOrange" x2="0" y2="1"><stop offset="0" stop-color="#f2ae5c" /><stop offset="1" stop-color="#c9782c" /></linearGradient>
      </defs>
    </svg>

    <div class="app">
      <header class="menubar">
        <span class="grip">▲</span>
        <nav class="menus"><button v-for="m in menus" :key="m">{{ m }}</button></nav>
        <label class="combo desk-combo"><Icon name="desk" size="14" /><select aria-label="Desktop"><option>Build</option></select><span class="step"><Icon name="updown" size="14" /></span></label>
        <label class="combo desk-combo"><Icon name="radial" size="14" /><select aria-label="Radial menu"><option>Main</option></select><span class="step"><Icon name="updown" size="14" /></span></label>
        <span class="fill"></span>
        <label class="combo main-combo"><Icon name="clapperWide" size="17" /><select aria-label="Take"><option>Main</option></select><span class="step"><Icon name="updown" size="14" /></span></label>
        <button class="help-btn" aria-label="Help"><Icon name="help" size="14" /></button>
      </header>

      <div class="shelves">
        <section v-for="s in shelves" :key="s.cls" :class="['shelf', s.cls]">
          <span class="grip"><template v-if="s.cls === 'left'">▲</template><i v-else class="dots"></i></span>
          <div class="shelf-main">
            <div class="shelf-tabs">
              <button v-for="(t, i) in s.tabs" :key="t" :class="{ on: i === 0 }">{{ t }}</button>
              <button class="add" aria-label="Add shelf"><Icon name="plus" size="10" /></button>
              <span class="fill"></span>
              <button class="drop" aria-label="Shelf menu"><Icon name="down" size="7" /></button>
            </div>
            <div class="shelf-tools">
              <div class="tool-row">
                <button v-for="[t, ic] in s.tools" :key="t" :class="{ two: t.includes('\n') }"><Icon :name="ic" size="19" /><span>{{ t }}</span></button>
                <button v-if="s.cls === 'right'" class="two partial"><Icon name="gamepad" size="19" /><span>Gan{{ '\n' }}Ca</span></button>
              </div>
              <button v-if="s.cls === 'right'" class="more" aria-label="More tools">▶</button>
            </div>
          </div>
        </section>
      </div>

      <main class="work">
        <section class="pane scene">
          <div class="pane-tabs">
            <button v-for="(t, i) in sceneTabs" :key="t" :class="{ on: i === 0 }">{{ t }}<b>×</b></button>
            <button class="add" aria-label="New tab"><Icon name="plus" size="10" /></button>
            <span class="fill"></span>
            <Icon name="minirect" size="12" /><Icon name="down" size="7" class="tabs-drop" />
          </div>
          <div class="path-row">
            <Icon name="back" size="16" /><Icon name="forward" size="14" class="fwd" />
            <div class="path"><Icon name="clapper" size="18" /><span>obj</span><i class="chev"></i><Icon name="geo" size="17" /><span>circle1</span><em class="fill"></em><span class="path-drop"><Icon name="down" size="8" /></span></div>
            <div class="path-icons"><Icon name="pin" size="16" /><Icon name="target" size="17" /><i class="gap"></i><Icon name="shade" size="18" /><Icon name="ghost" size="18" /><Icon name="square" size="17" /></div>
          </div>
          <div class="view-bar">
            <span class="grip">▲</span>
            <Icon name="viewcam" size="17" /><strong>View</strong>
            <div class="view-tools">
              <button aria-label="Orbit"><Icon name="orbit" size="17" /></button><button aria-label="Snap"><Icon name="snapArrow" size="17" /></button><button aria-label="Clip"><Icon name="clipArrow" size="17" /></button>
              <i class="vsep"></i><button class="slim hl" aria-label="Camera"><Icon name="cameraOn" size="17" /></button><button class="slim" aria-label="Zoom region"><Icon name="zoomBox" size="14" /></button>
              <i class="vsep"></i><button class="mid" aria-label="Stop"><Icon name="stop" size="15" /></button><i class="vsep"></i>
              <button class="mid" aria-label="Snapshot"><Icon name="snapshot" size="16" /></button><button class="end" aria-label="Display settings"><Icon name="gearBox" size="14" /></button>
            </div>
            <span class="fill"></span>
            <Icon name="people" size="17" /><Icon name="help" size="15" class="view-help" />
          </div>
          <div class="scene-body">
            <aside class="toolbar left-bar">
              <div class="bar-top">◀</div>
              <div class="modes"><button aria-label="Objects"><Icon name="objMode" size="18" /></button><button class="hl" aria-label="Components"><Icon name="compMode" size="18" /></button><button aria-label="Dynamics"><Icon name="dynMode" size="18" /></button></div>
              <div v-for="(g, i) in leftTools" :key="i" class="group"><button v-for="t in g" :key="t" :class="{ hl: active.has(t) }" :aria-label="t"><Icon :name="t" size="20" /></button></div>
              <span class="fill"></span>
              <div class="foot"><button aria-label="Flipbook"><Icon name="flipbook" size="18" /></button><button aria-label="Render"><Icon name="reelFlat" size="19" /></button></div>
            </aside>
            <div class="viewport">
              <svg viewBox="41 203 711 743" preserveAspectRatio="xMidYMid slice" role="img" aria-label="Scene">
                <line v-for="(l, i) in gridLines" :key="i" :x1="l.a[0]" :y1="l.a[1]" :x2="l.b[0]" :y2="l.b[1]" :class="l.major ? 'major' : 'minor'" />
                <ellipse cx="453" cy="608" rx="14" ry="8" transform="rotate(-14 453 608)" class="zero blue" />
                <ellipse cx="522" cy="614" rx="15" ry="8" transform="rotate(27 522 614)" class="zero red" />
                <path d="M42 286l20-3-4-3M186 405l20-5M190 406l-3-2" class="mark" />
                <polyline :points="curve" class="curve" />
                <g v-for="(p, i) in points" :key="i">
                  <circle :cx="p[0]" :cy="p[1]" r="2" class="pt" />
                  <text :x="p[0] + 1" :y="p[1] + 13" class="num">{{ p[2] }}</text>
                  <text :x="p[0] + 1" :y="p[1] + 13" class="num">{{ p[3] }}</text>
                </g>
                <path d="M56 931V916" stroke="#39e03a" stroke-width="1.500" /><path d="M56 931l-7-9" stroke="#2525c0" stroke-width="1.500" /><path d="M56 931l-8 3" stroke="#d02020" stroke-width="1.500" />
                <text x="56" y="922" class="axis" fill="#39e03a">y</text><text x="48" y="926" class="axis" fill="#2525c0">z</text><text x="46" y="937" class="axis" fill="#d02020">x</text>
              </svg>
              <div class="cams"><button>Persp<Icon name="down" size="6" /></button><button>No cam<Icon name="down" size="6" /></button></div>
              <span class="edition">Indie Edition</span>
            </div>
            <aside class="toolbar right-bar">
              <div class="bar-top">▶</div>
              <div v-for="(g, i) in displayTools" :key="i" class="group"><button v-for="t in g" :key="t" :class="{ hl: active.has(t) }" :aria-label="t"><Icon :name="t" size="16" /><small v-if="t === 'numPoint' || t === 'numPrim'">12</small></button></div>
              <span class="fill"></span>
              <div class="bar-end">▼</div>
            </aside>
          </div>
        </section>

        <div class="splitter"><i>◂</i><i class="dots"></i><i>▸</i></div>

        <section class="pane network">
          <div class="net-top"><i>▾</i><i class="dots wide"></i><i>▾</i></div>
          <div class="pane-tabs">
            <button v-for="(t, i) in netTabs" :key="t" :class="{ on: i === 0, slanted: i === 0 }">{{ t }}<b>×</b></button>
            <button class="add" aria-label="New tab"><Icon name="plus" size="10" /></button>
            <span class="fill"></span>
            <Icon name="minirect" size="12" /><Icon name="down" size="7" class="tabs-drop" />
          </div>
          <div class="path-row">
            <Icon name="back" size="16" /><Icon name="forward" size="14" class="fwd" />
            <div class="path"><Icon name="clapper" size="18" /><span>obj</span><i class="chev"></i><Icon name="geo" size="17" /><span>circle1</span><em class="fill"></em><span class="path-drop"><Icon name="down" size="8" /></span></div>
            <div class="path-icons"><Icon name="pin" size="16" /><Icon name="target" size="17" /></div>
          </div>
          <div class="net-menu">
            <span class="grip">▲</span>
            <nav class="menus"><button v-for="m in netMenus" :key="m">{{ m }}</button></nav>
            <span class="fill"></span>
            <div class="net-icons"><Icon name="tools" size="16" /><Icon name="tree" size="15" /><Icon name="list" size="15" /></div>
            <div class="net-icons"><Icon name="palette" size="15" /><Icon name="listGrid" size="15" /></div>
            <div class="net-icons"><Icon name="netbox" size="15" /><Icon name="note" size="16" /><Icon name="addImage" size="16" /><Icon name="crate" size="15" /></div>
            <div class="net-icons"><Icon name="search" size="16" /><Icon name="eye" size="15" /></div>
          </div>
          <div class="net-body">
            <svg class="graph" viewBox="785 203 690 743" preserveAspectRatio="xMinYMin slice" role="img" aria-label="Node network">
              <text x="1070" y="235" class="ghost-text">Indie Edition</text>
              <text x="1346" y="241" class="geo-title">Geometry</text>
              <circle cx="1096" cy="708" r="51" fill="#754377" /><circle cx="1096" cy="708" r="44" fill="#44649c" /><circle cx="1096" cy="708" r="35" fill="#9773d0" />
              <g class="wire">
                <path d="M1079 211V264M1079 312V369" /><path d="M1079 417Q1082 440 1102 440H1194Q1213 441 1216 464" /><path d="M1079 417L1082 576" />
                <path d="M1216 512C1216 527 1208 539 1192 542L1136 551Q1115 554 1110 576" />
              </g>
              <path d="M1096 635V684" stroke="#a9bd97" fill="none" />
              <g v-for="n in nodes" :key="n.name">
                <rect :x="n.x - 52" :y="n.y - 16" width="104" height="32" rx="5" fill="#c8c8c8" />
                <path :d="`M${n.x - 36} ${n.y - 15}l-4 30M${n.x - 22} ${n.y - 15}l-4 30M${n.x + 26} ${n.y - 15}l-4 30M${n.x + 40} ${n.y - 15}l-4 30`" class="slat" />
                <svg v-if="n.kind === 'mirror'" :x="n.x - 12" :y="n.y - 13" width="25" height="25" viewBox="0 0 24 24" v-html="icons.mirror"></svg>
                <path v-else :transform="`translate(${n.x - 12} ${n.y - 12})`" d="M1 11l5-6 9-2 9 11-4 1-4 5-6-1-2 4-4-5z" fill="#8d9298" />
                <path v-if="n.kind === 'smooth'" :transform="`translate(${n.x - 12} ${n.y - 12})`" d="M1 12V5l3 1 1-3 4 2 6-2q5 2 9 11" fill="none" stroke="#cc4348" stroke-width="1.500" />
                <circle :cx="n.x" :cy="n.y - 24" r="5" class="dot" /><circle :cx="n.x" :cy="n.y + 24" r="5" class="dot" />
                <text :x="n.x + 61" :y="n.y + 6" class="name">{{ n.name }}</text>
              </g>
              <circle cx="1079" cy="211" r="5" class="dot" />
              <text x="1140" y="329" class="attr">P</text>
              <path d="M1058 584Q1096 574 1133 584" fill="none" stroke="#b5b5b5" stroke-width="9" stroke-linecap="round" />
              <path d="M1058 591Q1095 585 1133 591 1147 594 1147 606 1147 619 1133 622 1095 628 1058 622 1043 619 1043 606 1043 594 1058 591z" fill="#c8c8c8" />
              <path d="M1059 591l-4 30M1073 590l-4 34M1120 590l-4 34M1134 592l-4 30" class="slat" />
              <path d="M1084 593h12l2 5-6 3-8-4zM1090 604h17l-2 5-12 1zM1084 616l10-4 8 1-4 4h-14z" fill="#e4e4e4" stroke="#777" /><path d="M1095 597l5 2-1 4-6 0zM1094 610l5 2-3 4-5-2z" fill="#a92b2b" />
              <circle cx="1096" cy="635" r="5" class="dot" /><text x="1156" y="612" class="name">merge2</text>
              <rect x="1043" y="691" width="105" height="34" rx="5" fill="#c8c8c8" stroke="#eac63f" stroke-width="2" /><rect x="1045" y="693" width="101" height="30" rx="4" fill="#c8c8c8" stroke="#222" />
              <path d="M1121 693h14l-4 30h-14z" fill="#d67ad6" /><path d="M1135 693h7q4 0 4 4v22q0 4-4 4h-11z" fill="#06adf0" /><path d="M1060 693l-4 30M1074 693l-4 30M1121 693l-4 30M1135 693l-4 30" class="slat" />
              <svg x="1084" y="695" width="25" height="25" viewBox="0 0 24 24" v-html="icons.mirror"></svg>
              <circle cx="1095" cy="684" r="5" class="dot" /><circle cx="1095" cy="732" r="5" class="dot" /><text x="1156" y="714" class="name">mirror3</text>
            </svg>
            <div class="keycast"><kbd><Icon name="logo" size="21" />0</kbd><kbd><Icon name="logo" size="21" />-</kbd></div>

            <form class="params" @submit.prevent>
              <div class="p-head">
                <Icon name="mirrorMenu" size="19" /><label for="node-name">Mirror</label><input id="node-name" value="mirror3" />
                <div class="p-icons"><Icon name="gear" size="16" /><Icon name="hLogo" size="17" /><Icon name="search" size="16" /><Icon name="info" size="15" /><Icon name="help" size="15" /></div>
              </div>
              <div class="row"><label for="group">Group</label><div class="ctl"><input id="group" value="" /><button class="menu-btn" aria-label="Groups"><Icon name="down" size="8" /></button><Icon name="pick" size="15" class="pick" /></div></div>
              <div class="row"><label for="ox">Origin</label><div class="ctl triple"><input id="ox" value="0" /><input aria-label="Origin y" value="0" /><input aria-label="Origin z" value="0" /></div></div>
              <div class="row"><label for="dist">Distance</label><div class="ctl"><input id="dist" class="short" value="0" /><input v-model="distance" class="slider half" type="range" min="-1" max="1" step="0.01" aria-label="Distance slider" /></div></div>
              <div class="row"><label for="dx">Direction</label><div class="ctl triple"><input id="dx" class="bold" value="0" /><span class="edit"><input aria-label="Direction y" value="-" /><i></i></span><input aria-label="Direction z" value="0" /></div></div>
              <div class="row"><label for="rev">Reverse Normals</label><div class="ctl"><span class="combo rev"><select id="rev"><option>Reverse</option></select><span class="step"><Icon name="updown" size="14" /></span></span></div></div>
              <div class="row tight"><span></span><div class="ctl"><input id="keep" type="checkbox" checked /><label for="keep" class="keep">Keep Original</label></div></div>
              <div class="row"><span class="toggle"><input type="checkbox" checked aria-label="Enable consolidate seam" /><label for="seam">Consolidate Seam</label></span><div class="ctl"><input id="seam" class="short" value="0.0001" /><input v-model="seam" class="slider" type="range" min="0" max="1" step="0.01" aria-label="Seam slider" /></div></div>
              <div class="row off"><span class="toggle"><input type="checkbox" aria-label="Enable output group" /><label for="outg">Output Group</label></span><div class="ctl"><input id="outg" value="mirror" disabled /></div></div>
              <svg class="ibeam" width="8" height="16" viewBox="0 0 8 16" aria-hidden="true"><path d="M1 1h2l1 1 1-1h2M4 2v12M1 15h2l1-1 1 1h2" fill="none" stroke="#111" stroke-width="3" /><path d="M1 1h2l1 1 1-1h2M4 2v12M1 15h2l1-1 1 1h2" fill="none" stroke="#fff" /></svg>
            </form>
          </div>
        </section>
      </main>

      <footer class="timeline">
        <span class="grip end">▼</span>
        <div class="t-left">
          <div class="t-row">
            <button v-for="b in ['toStart', 'playBack', 'stopPlay', 'play', 'toEnd']" :key="b" :class="{ hl: b === 'stopPlay' }" :aria-label="b"><Icon :name="b" size="20" /></button>
            <input class="frame" aria-label="Current frame" value="1" />
            <button class="step-btn" aria-label="Previous frame"><Icon name="prevStep" size="11" /></button><button class="step-btn" aria-label="Next frame"><Icon name="nextStep" size="11" /></button>
          </div>
          <div class="t-row low">
            <button v-for="b in ['clip', 'speaker', 'loop', 'clock', 'ticks']" :key="b" :aria-label="b"><Icon :name="b" size="18" /></button>
            <button class="key-btn" disabled aria-label="Previous key"><Icon name="keyPrev" size="14" /></button><button class="key-btn" disabled aria-label="Next key"><Icon name="keyNext" size="14" /></button>
          </div>
        </div>
        <div class="t-mid">
          <svg class="ruler" width="100%" height="36" role="img" aria-label="Timeline">
            <rect y="22" width="100%" height="1" fill="#b8b8b8" />
            <g v-for="f in frames" :key="f">
              <line :x1="frameX(f)" :x2="frameX(f)" :y1="f % 24 ? 18 : 15" :y2="f % 24 ? 27 : 30" stroke="#999" />
              <text v-if="f % 24 === 0" :x="frameX(f)" y="10" class="tick">{{ f === 240 ? 2 : f }}</text>
            </g>
            <path d="M1 23V1h23v18H5z" fill="#000" stroke="#ddd" /><text x="9" y="16" class="now">1</text>
          </svg>
          <div class="range">
            <input class="dim" aria-label="Global start" value="1" /><input aria-label="Range start" value="1" />
            <i class="cap"></i><span class="bar"></span><i class="cap rev-cap"></i>
            <input aria-label="Range end" value="240" /><input class="dim" aria-label="Global end" value="240" />
          </div>
        </div>
        <div class="t-key"><button class="round" aria-label="Set key"><Icon name="key" size="20" /></button><button class="round-drop" aria-label="Key menu"><Icon name="down" size="7" /></button></div>
        <div class="t-right">
          <div><button class="sq" aria-label="Scoped"><Icon name="scopeKeys" size="17" /></button><button class="channels">0 keys, 0/0 channels<Icon name="up" size="9" /></button></div>
          <div><button class="sq" aria-label="Curves"><Icon name="scopeWave" size="17" /></button><label class="combo key-combo"><select aria-label="Key scope"><option>Key All Channels</option></select><span class="step"><Icon name="updown" size="13" /></span></label></div>
        </div>
      </footer>
      <div class="status">
        <div class="status-icons"><Icon name="brain" size="18" /><Icon name="refresh" size="15" /></div>
        <label class="combo auto"><select aria-label="Update mode"><option>Auto Update</option></select><span class="step"><Icon name="updown" size="13" /></span></label>
      </div>
    </div>
  </div>
</template>

<style>
body { margin: 0; background: #000; }
</style>

<style scoped>
* { box-sizing: border-box; }
.screen { min-height: 100vh; display: flex; flex-direction: column; background: #000; padding: 31px 0 34px; font-family: "Noto Sans CJK SC", "Open Sans", sans-serif; font-size: 12px; line-height: 16px; color: #c4c4c4; overflow: hidden; }
.defs { position: absolute; }
.app { flex: 1; display: flex; flex-direction: column; border-top: 3px solid #e2e0e0; border-bottom: 3px solid #d5dbea; background: #2d2d2d; }
button, input, select { font: inherit; color: inherit; border: 0; margin: 0; padding: 0; background: none; min-width: 0; outline: 0; }
select { appearance: none; }
.icon { display: block; flex: none; }
.fill { flex: 1; }
.grip { flex: none; width: 9px; margin-left: 1px; background: linear-gradient(#4a4a4a, #3a3a3a); border-right: 1px solid #000; color: #000; font: 9px/10px "DejaVu Sans", sans-serif; text-align: center; }
.grip.end { display: flex; align-items: flex-end; justify-content: center; }
.dots { display: block; width: 5px; height: 15px; background: radial-gradient(circle, #111 1px, transparent 1px) 0 0 / 3px 3px; }
.dots.wide { width: 21px; height: 6px; background-image: radial-gradient(circle, #888 1px, transparent 1px); }
.splitter .dots { background-image: radial-gradient(circle, #888 1px, transparent 1px); }

.menubar { display: flex; height: 26px; background: linear-gradient(#383838, #2f2f2f); border-bottom: 1px solid #000; align-items: stretch; }
.menus { display: flex; align-items: center; font-size: 12px; line-height: 20px; }
.menubar .menus { margin-left: 5px; gap: 9px; }
.combo { display: flex; align-items: center; background: linear-gradient(#4c4c4c, #3e3e3e); }
.combo select { flex: 1; }
.combo .step { align-self: stretch; display: flex; align-items: center; justify-content: center; width: 22px; background: #303030; }
.desk-combo { width: 126px; margin-right: 6px; padding-left: 6px; gap: 5px; }
.menubar .menus + .desk-combo { margin-left: 25px; }
.main-combo { width: 171px; padding-left: 5px; gap: 4px; }
.main-combo .step { width: 24px; }
.help-btn { width: 33px; display: grid; place-items: center; border-left: 1px solid #000; }

.shelves { display: grid; grid-template-columns: 965fr 955fr; height: 58px; background: #222; border-bottom: 1px solid #000; }
.shelf { display: flex; min-width: 0; }
.shelf.right .grip { margin: 0; width: 10px; display: grid; place-items: center; }
.shelf-main { flex: 1; min-width: 0; display: flex; flex-direction: column; border-right: 1px solid #000; }
.shelf-tabs { display: flex; height: 18px; font-size: 9px; line-height: 17px; background: #242424; }
.shelf-tabs button { padding: 0 6px; border-right: 1px solid #000; border-bottom: 1px solid #000; border-top: 1px solid #444; background: linear-gradient(#303030, #272727); white-space: nowrap; }
.left .shelf-tabs button { padding-right: 7px; }
.shelf-tabs .on { background: #474747; border-bottom-color: #474747; }
.shelf-tabs .add, .shelf-tabs .drop { background: none; border-color: transparent; }
.shelf-tools { flex: 1; display: flex; min-height: 0; background: linear-gradient(#454545, #373737); }
.tool-row { flex: 1; min-width: 0; display: flex; padding-left: 1px; font-size: 9px; }
.right .tool-row { padding-left: 17px; }
.tool-row button { flex: none; min-width: 41px; padding: 3px 4px 0; display: flex; flex-direction: column; align-items: center; }
.tool-row span { white-space: pre; line-height: 9px; }
.tool-row button:not(.two) span { line-height: 13px; margin-top: 1px; }
.tool-row .two { width: 65px; }
.tool-row .two .icon { margin-bottom: -2px; }
.tool-row .partial { flex: 1; width: auto; min-width: 0; padding: 3px 0 0; align-items: flex-end; text-align: right; }
.more { width: 18px; color: #888; font: 10px "DejaVu Sans", sans-serif; }

.work { flex: 1; display: grid; grid-template-columns: 779fr 6px 1135fr; grid-template-rows: minmax(0, 1fr); min-height: 0; }
.pane { min-width: 0; display: flex; flex-direction: column; }
.scene { border-left: 6px solid #3a3a3a; border-right: 1px solid #000; }
.splitter { background: #484848; display: flex; flex-direction: column; align-items: center; justify-content: center; gap: 14px; color: #888; font-size: 9px; }
.net-top { height: 7px; background: #484848; border-top: 1px solid #5c5c5c; display: flex; align-items: center; justify-content: center; gap: 17px; color: #888; font: 9px/7px "DejaVu Sans", sans-serif; }
.pane-tabs { display: flex; align-items: center; height: 19px; background: #2a2a2a; font-size: 10px; line-height: 19px; padding-right: 4px; }
.pane-tabs button { height: 100%; padding: 0 4px 0 6px; display: flex; align-items: center; border-right: 1px solid #1a1a1a; margin-right: 1px; background: #303030; white-space: nowrap; }
.pane-tabs button b { margin-left: 11px; width: 6px; font-size: 11px; text-align: center; }
.network .pane-tabs button b { margin-left: 13px; }
.pane-tabs .on { background: #474747; }
.pane-tabs .slanted { font-style: italic; }
.pane-tabs .slanted b { font-style: normal; }
.pane-tabs .add { background: none; border: 0; padding: 0 6px; }
.tabs-drop { margin-left: 10px; }
.path-row { display: flex; align-items: center; height: 34px; background: linear-gradient(#454545, #3a3a3a); border-bottom: 1px solid #000; padding: 0 3px 0 6px; }
.fwd { margin-left: 10px; margin-right: 9px; }
.path { flex: 1; height: 23px; display: flex; align-items: center; border: 1px solid #000; background: #3b3b3b; font-size: 11px; padding-left: 6px; }
.path span:not(.path-drop) { margin-left: 3px; }
.chev { width: 12px; height: 12px; border-top: 1px solid #000; border-right: 1px solid #000; transform: rotate(45deg); margin: 0 9px 0 -1px; }
.path-drop { width: 20px; align-self: stretch; display: grid; place-items: center; background: #2c2c2c; }
.path-icons { display: flex; align-items: center; gap: 7px; margin-left: 9px; }
.gap { width: 3px; }
.view-bar { display: flex; align-items: center; height: 32px; background: #2e2e2e; border-top: 2px solid #484848; border-bottom: 1px solid #000; padding-right: 6px; }
.view-bar .grip, .net-menu .grip { align-self: stretch; margin-right: 5px; }
.view-bar strong { margin-left: 4px; font-size: 11px; font-weight: 700; color: #ccc; }
.view-tools { display: flex; align-items: center; margin-left: 210px; }
.view-tools button { width: 33px; height: 22px; display: grid; place-items: center; }
.view-tools .slim { width: 22px; margin-left: 3px; }
.view-tools .mid { width: 31px; }
.view-tools .end { width: 18px; }
.vsep { width: 1px; height: 26px; background: #161616; }
.view-tools .slim + .vsep { margin-left: 6px; }
.hl { background: #5a7391; box-shadow: inset 1px 1px #2b3747; }
.view-help { margin-left: 9px; }

.scene-body { flex: 1; display: flex; min-height: 0; }
.toolbar { flex: none; background: #393939; display: flex; flex-direction: column; align-items: stretch; }
.toolbar button { position: relative; display: grid; place-items: center; }
.bar-top { height: 10px; background: #444; border-bottom: 1px solid #000; color: #000; font: 9px/9px "DejaVu Sans", sans-serif; }
.left-bar { width: 35px; border-left: 1px solid #000; }
.left-bar button { width: 26px; height: 28px; margin: 0 auto; }
.modes { margin: 6px auto 8px; border: 1px solid #1a1a1a; background: #474747; }
.left-bar .modes button { width: 24px; height: 23px; }
.left-bar .group { border-top: 1px solid #4c4c4c; padding: 4px 0; }
.foot { padding-bottom: 4px; }
.foot button { height: 25px; }
.viewport { flex: 1; min-width: 0; position: relative; background: linear-gradient(#627c8b, #7b909b 25%, #92a4a9 50%, #a9b2ba 75%, #bec7c8); }
.viewport > svg { position: absolute; inset: 0; width: 100%; height: 100%; }
.minor { stroke: #63747d; stroke-opacity: .45; stroke-width: 1; }
.major { stroke: #63747d; stroke-opacity: .45; stroke-width: 2; }
.zero { fill: none; stroke-width: 6; }
.blue { stroke: #7d83a8; }
.red { stroke: #a97d85; }
.mark { fill: none; stroke: #6f7b9a; stroke-width: 3; }
.curve { fill: none; stroke: #fff; stroke-width: 1; }
.pt { fill: #0d0da8; }
.num { font: 10px "DejaVu Sans Mono", monospace; fill: #0707b4; }
.axis { font: 10px "DejaVu Sans", sans-serif; }
.cams { position: absolute; top: 5px; right: 6px; display: flex; gap: 8px; }
.cams button { height: 20px; padding: 0 6px; border: 1px solid #aeb9bf; border-radius: 10px; background: #6e7c85; color: #eee; font: 10px "DejaVu Sans", sans-serif; display: flex; align-items: center; gap: 3px; }
.edition { position: absolute; right: 13px; bottom: 8px; color: #e8ea2c; font: 10px/16px "DejaVu Sans", sans-serif; }
.right-bar { width: 26px; border-left: 1px solid #2a2a2a; }
.right-bar .bar-top { text-align: right; }
.right-bar .group { display: flex; flex-direction: column; gap: 2px; }
.right-bar .group:nth-child(2) { margin-top: 19px; }
.right-bar button { width: 22px; height: 23px; margin: 0 auto; }
.right-bar .group + .group { border-top: 1px solid #4c4c4c; margin-top: 3px; padding-top: 3px; }
.right-bar .group:nth-child(4) { margin-top: 6px; padding-top: 6px; }
.right-bar small { position: absolute; top: 3px; right: 1px; font: 700 9px/10px "DejaVu Sans", sans-serif; color: #ddd; }
.bar-end { text-align: center; color: #888; font: 9px/16px "DejaVu Sans", sans-serif; }

.net-menu { display: flex; align-items: center; height: 25px; background: linear-gradient(#363636, #2e2e2e); border-bottom: 1px solid #000; padding-right: 4px; }
.net-menu .menus { margin-left: 4px; gap: 13px; }
.net-icons { display: flex; align-items: center; gap: 9px; margin-left: 25px; }
.net-body { flex: 1; display: flex; min-height: 0; position: relative; background: #2d2d2d; }
.graph { flex: 1; min-width: 0; height: 100%; }
.ghost-text { font-size: 19px; fill: #404040; }
.geo-title { font-size: 23px; font-weight: 700; fill: #4f4f4f; }
.name { font-size: 21px; fill: #c2c2c2; }
.attr { font-size: 18px; fill: #6b96d0; }
.wire path { fill: none; stroke: #5580b8; stroke-width: 1; }
.slat { fill: none; stroke: #8a8a8a; stroke-width: 1; }
.dot { fill: #b5b5b5; }
.keycast { position: absolute; left: 91px; top: 603px; z-index: 2; display: flex; flex-direction: column; align-items: flex-start; gap: 15px; }
.keycast kbd { height: 65px; padding: 0 6px; display: flex; align-items: center; gap: 6px; border-radius: 12px; background: #171717; color: #999; font: 800 37px/65px "Open Sans", sans-serif; }

.params { flex: none; align-self: flex-start; position: relative; width: 445px; min-height: 450px; background: #3a3a3a; }
.p-head { display: flex; align-items: center; height: 27px; margin: 0 2px 2px; padding: 1px 0 0 5px; border-bottom: 1px solid #000; }
.p-head label { width: 37px; margin-left: 2px; font-weight: 700; font-size: 11px; color: #c8c8c8; }
.params input:not([type="checkbox"]):not([type="range"]) { height: 22px; padding: 0 4px; background: #111; border: 1px solid #2a2a2a; color: #ddd; font: 12px/18px "DejaVu Sans Mono", monospace; }
.p-head input { flex: 1; }
.p-icons { display: flex; align-items: center; gap: 10px; margin: 0 5px 0 10px; }
.row { display: grid; grid-template-columns: 139px 1fr; column-gap: 15px; align-items: center; height: 25px; padding-right: 11px; font-size: 11px; text-align: right; }
.row.tight { height: 22px; }
.ctl { display: flex; align-items: center; gap: 2px; min-width: 0; text-align: left; }
.ctl > input { flex: 1; }
.ctl.triple { display: grid; grid-template-columns: repeat(3, 1fr); }
.params .ctl > input.short { flex: 0 0 73px; }
.ctl > input[type="checkbox"] { flex: none; }
.menu-btn { width: 19px; height: 20px; display: grid; place-items: center; background: #444; border: 1px solid #222; }
.pick { margin: 0 0 0 6px; }
.params .row .ctl.triple input.bold { font-weight: 700; color: #fff; }
.edit { position: relative; display: flex; }
.params .row .ctl.triple .edit input { width: 100%; background: #171411; border-color: #cf9c4a; }
.edit i { position: absolute; left: 12px; top: 4px; width: 1px; height: 14px; background: #d59b25; }
.rev { width: 97px; height: 21px; padding-left: 14px; border: 1px solid #2b2b2b; }
.keep { margin-left: 5px; }
.toggle { display: flex; justify-content: space-between; align-items: center; padding-left: 19px; }
.params input[type="checkbox"] { appearance: none; width: 14px; height: 14px; background: #111; border: 1px solid #2a2a2a; position: relative; }
.params input[type="checkbox"]:checked::after { content: ""; position: absolute; inset: 0; background: #e4e4e4; clip-path: polygon(0 50%, 22% 45%, 38% 68%, 85% 0, 100% 8%, 50% 100%, 32% 100%); }
.slider { appearance: none; height: 22px; margin: 0 2px 0 1px; }
.slider::-webkit-slider-runnable-track { height: 4px; border: 1px solid #000; border-radius: 2px; background: #000; }
.slider.half::-webkit-slider-runnable-track { background: linear-gradient(90deg, #2a5fa8 50%, #000 50%); }
.slider::-webkit-slider-thumb { appearance: none; width: 6px; height: 20px; margin-top: -9px; background: #8c8c8c; border: 1px solid #222; }
.off { color: #777; }
.params .off input:disabled:not([type="range"]) { background: #2f2f2f; color: #4f4f4f; }
.ibeam { position: absolute; left: 203px; top: 122px; }

.timeline { display: flex; height: 72px; background: #2c2c2c; border-top: 1px solid #666; border-bottom: 1px solid #000; }
.t-left { flex: none; width: 221px; padding: 7px 0 0 5px; }
.t-row { display: flex; height: 28px; }
.t-row button { width: 26px; margin-right: 1px; display: grid; place-items: center; background: linear-gradient(#505050, #3c3c3c); border: 1px solid #222; }
.t-row .hl { background: #5a7391; }
.t-row .frame { width: 46px; margin: 0 2px 0 4px; }
.timeline input { background: #111; border: 1px solid #222; padding: 0 3px; font-size: 12px; color: #ddd; }
.t-row .step-btn { width: 13px; }
.t-row.low { height: 24px; margin-top: 7px; }
.t-row.low .key-btn { width: 22px; background: #2f2f2f; }
.t-row.low .key-btn:nth-last-child(2) { margin-left: 4px; }
.t-mid { flex: 1; min-width: 0; padding-top: 1px; padding-left: 4px; }
.ruler { display: block; overflow: visible; }
.tick { font-size: 10px; fill: #8a8a8a; }
.now { font-size: 14px; fill: #eee; }
.range { display: flex; align-items: center; height: 20px; margin-top: 7px; }
.range input { width: 41px; height: 20px; margin-right: 4px; }
.range input:last-child { margin-right: 0; }
.timeline .dim { background: #222; }
.bar { flex: 1; height: 5px; background: #747474; }
.cap { border-left: 6px solid #aaa; border-top: 7px solid transparent; border-bottom: 7px solid transparent; margin-left: -2px; }
.rev-cap { border-left: 0; border-right: 6px solid #aaa; margin: 0 4px 0 0; }
.t-key { display: flex; align-items: center; flex: none; width: 61px; padding-left: 4px; }
.round { width: 40px; height: 40px; border-radius: 50%; background: #262626; border: 1px solid #1c1c1c; display: grid; place-items: center; }
.round-drop { width: 14px; height: 20px; margin-left: -1px; background: #383838; border: 1px solid #222; display: grid; place-items: center; }
.t-right { flex: none; width: 191px; padding-top: 8px; display: flex; flex-direction: column; gap: 4px; }
.t-right > div { display: flex; align-items: center; gap: 6px; }
.sq { width: 23px; height: 24px; display: grid; place-items: center; background: #444; border: 1px solid #1c1c1c; margin-left: 3px; }
.channels { width: 154px; height: 24px; padding: 0 5px 0 17px; display: flex; align-items: center; justify-content: space-between; background: linear-gradient(#4c4c4c, #3a3a3a); border: 1px solid #1c1c1c; font-size: 11px; }
.key-combo { width: 152px; height: 21px; padding-left: 13px; font-size: 11px; }
.status { height: 25px; display: flex; justify-content: flex-end; background: #191919; font-size: 11px; line-height: 14px; }
.status-icons { width: 54px; padding: 0 6px 3px 4px; display: flex; align-items: center; justify-content: space-between; background: #333; }
.auto { width: 118px; padding: 0 0 3px 14px; border-left: 1px solid #222; }
</style>
